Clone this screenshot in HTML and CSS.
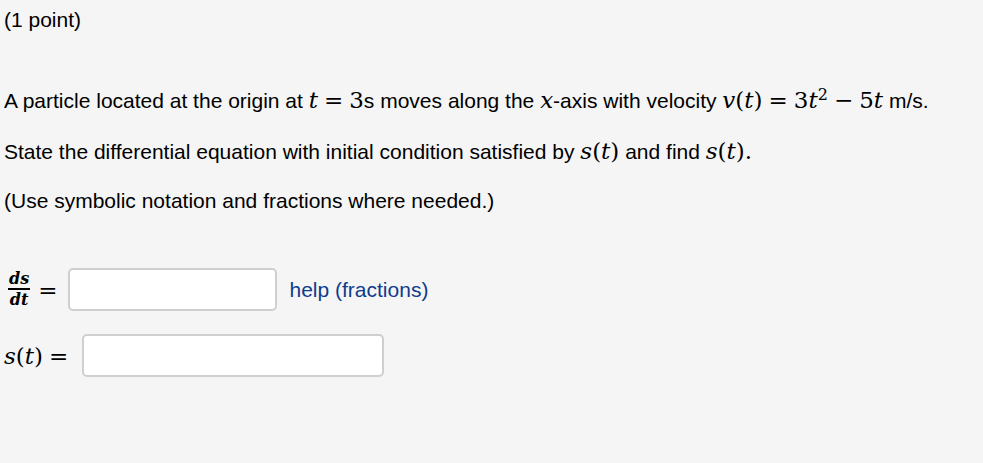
FILE: index.html
```html
<!DOCTYPE html>
<html>
<head>
<meta charset="utf-8">
<link rel="stylesheet" href="styles.css">
</head>
<body>
<div class="page">
  <p class="points">(1 point)</p>
  <p class="line first">A particle located at the origin at <span class="m">t</span><span class="mr rel">=</span><span class="mr">3</span>s moves along the <span class="m">x</span>-axis with velocity <span class="m">v</span><span class="mr">(</span><span class="m">t</span><span class="mr">)</span><span class="mr rel">=</span><span class="mr">3</span><span class="m">t</span><sup class="mr">2</sup><span class="mr bin">&minus;</span><span class="mr">5</span><span class="m">t</span> m/s.</p>
  <p class="line">State the differential equation with initial condition satisfied by <span class="m">s</span><span class="mr">(</span><span class="m">t</span><span class="mr">)</span> and find <span class="m">s</span><span class="mr">(</span><span class="m">t</span><span class="mr">).</span></p>
  <p class="line">(Use symbolic notation and fractions where needed.)</p>
  <div class="row row1">
    <span class="frac"><span class="num m">ds</span><span class="den m">dt</span></span>
    <span class="mr eq">=</span>
    <span class="input w1"></span>
    <a class="help">help (fractions)</a>
  </div>
  <div class="row row2">
    <span class="lbl"><span class="m">s</span><span class="mr">(</span><span class="m">t</span><span class="mr">)</span></span>
    <span class="mr eq">=</span>
    <span class="input w2"></span>
  </div>
</div>
</body>
</html>
```
FILE: styles.css
```css
html, body {
  margin: 0;
  padding: 0;
  background: #f5f5f5;
}
.page {
  padding: 0 4px;
  font-family: "Liberation Sans", Arial, sans-serif;
  font-size: 21px;
  color: #000;
}
p {
  margin: 0;
}
.points {
  padding-top: 8px;
  line-height: 24px;
}
.line {
  line-height: 24px;
  height: 24px;
  margin-top: 27px;
  white-space: nowrap;
}
.line.first {
  margin-top: 56px;
}
.line + .line + .line {
  margin-top: 26px;
}
.m {
  font-family: "DejaVu Serif", "Liberation Serif", serif;
  font-style: italic;
  font-size: 23px;
}
.mr {
  font-family: "DejaVu Serif", "Liberation Serif", serif;
  font-size: 23px;
}
.rel {
  margin: 0 6px;
}
.bin {
  margin: 0 6px;
}
sup.mr {
  font-size: 16px;
  line-height: 0;
}
.row {
  display: flex;
  align-items: center;
}
.row1 {
  margin-top: 55px;
  height: 43px;
}
.row2 {
  margin-top: 23px;
  height: 43px;
}
.frac {
  display: inline-flex;
  flex-direction: column;
  align-items: center;
  margin-left: 4px;
}
.frac .m {
  font-size: 16px;
  line-height: 14px;
  font-weight: bold;
}
.frac .num {
  border-bottom: 2px solid #000;
  padding: 0 1px 2px;
}
.frac .den {
  padding-top: 3px;
}
.eq {
  margin: 0 11px 0 8px;
}
.lbl {
  white-space: nowrap;
}
.row2 .eq {
  margin: 0 14px 0 6px;
}
.input {
  display: block;
  height: 43px;
  background: #fff;
  border: 2px solid #cfcfcf;
  border-radius: 5px;
  box-sizing: border-box;
}
.w1 {
  width: 209px;
}
.w2 {
  width: 302px;
}
.help {
  color: #0f3c8c;
  margin-left: 12px;
}
```
